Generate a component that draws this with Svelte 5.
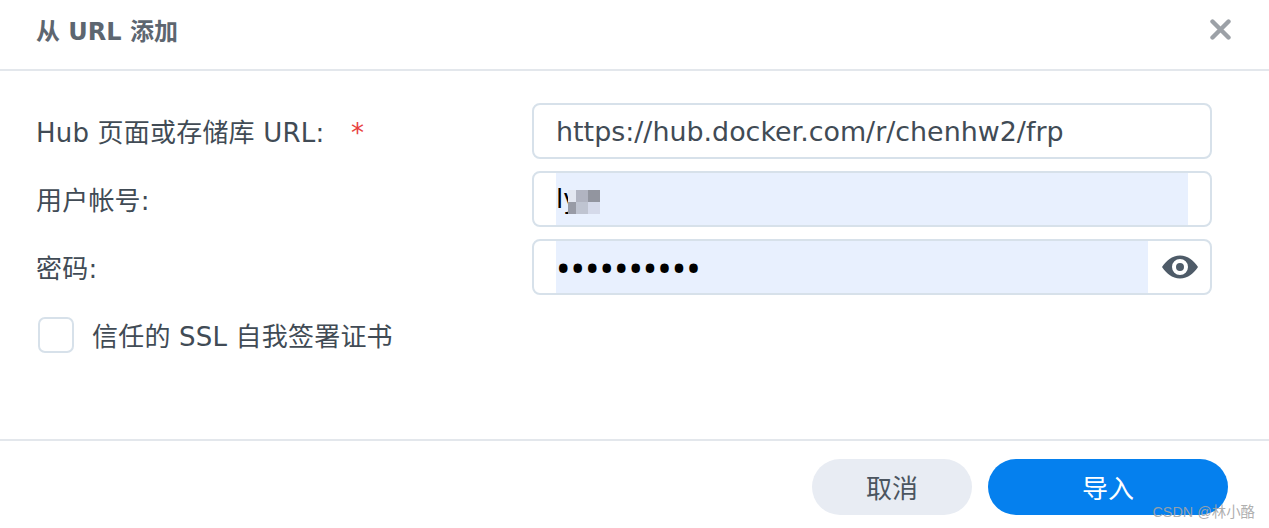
<script>
	let url = $state('https://hub.docker.com/r/chenhw2/frp');
	let user = $state('ly');
	let password = $state('1234567890');
	let trusted = $state(false);

	const mosaic = ['#e3e7f1', '#b1b4c1', '#92959f', '#989ba6', '#bfc4d1', '#d5daea'];
</script>

<div class="dialog">
	<header class="head">
		<h1 class="title">从 URL 添加</h1>
		<button type="button" class="close" aria-label="关闭">
			<svg viewBox="0 0 21 21" width="21" height="21">
				<path d="M2.500 2.500 18.500 18.500M18.500 2.500 2.500 18.500" stroke="#9ca1a7" stroke-width="4.400" stroke-linecap="round" fill="none" />
			</svg>
		</button>
	</header>

	<div class="body">
		<div class="row">
			<label class="label" for="hub-url">Hub 页面或存储库 URL: <span class="req">*</span></label>
			<div class="field">
				<input id="hub-url" class="input url" type="text" bind:value={url} />
			</div>
		</div>
		<div class="row">
			<label class="label" for="hub-user">用户帐号:</label>
			<div class="field">
				<input id="hub-user" class="input filled black" type="text" bind:value={user} />
				<div class="mosaic">
					{#each mosaic as color}
						<span style="background: {color}"></span>
					{/each}
				</div>
			</div>
		</div>
		<div class="row">
			<label class="label" for="hub-pass">密码:</label>
			<div class="field has-eye">
				<input id="hub-pass" class="input filled black pass" type="password" bind:value={password} />
				<button type="button" class="eye" aria-label="显示密码">
					<svg viewBox="0 0 36 24" width="36" height="24">
						<path fill-rule="evenodd" fill="#4e5b68" d="M18 .5C26 .5 32 6 36 12 32 18 26 23.500 18 23.500 10 23.500 4 18 0 12 4 6 10 .5 18 .5ZM18 4A8 8 0 1 0 18 20 8 8 0 1 0 18 4ZM18 8A4 4 0 1 1 18 16 4 4 0 1 1 18 8Z" />
					</svg>
				</button>
			</div>
		</div>
		<label class="check">
			<input type="checkbox" class="box" bind:checked={trusted} />
			<span class="check-text">信任的 SSL 自我签署证书</span>
		</label>
	</div>

	<footer class="foot">
		<button type="button" class="btn cancel">取消</button>
		<button type="button" class="btn primary">导入</button>
	</footer>

	<div class="watermark">CSDN @林小酪</div>
</div>

<style>
	:global(body) {
		margin: 0;
		background: #fff;
	}
	.dialog {
		position: relative;
		width: 1269px;
		height: 528px;
		overflow: hidden;
		display: flex;
		flex-direction: column;
		font-family: "DejaVu Sans", "Noto Sans CJK SC", sans-serif;
		color: #414b55;
	}
	.head {
		height: 71px;
		flex-shrink: 0;
		display: flex;
		align-items: center;
		justify-content: space-between;
		padding: 0 38px 11px 36px;
		box-sizing: border-box;
		border-bottom: 2px solid #e3e7ec;
	}
	.title {
		margin: 0;
		font-size: 24px;
		font-weight: 700;
		color: #5d6670;
	}
	.close {
		padding: 0;
		border: 0;
		background: none;
		display: flex;
	}
	.body {
		flex: 1;
		display: flex;
		flex-direction: column;
		gap: 12px;
		padding: 32px 57px 0 36px;
	}
	.row {
		display: flex;
		align-items: center;
		height: 56px;
	}
	.label {
		width: 496px;
		flex-shrink: 0;
		font-size: 26px;
		letter-spacing: 0.2px;
		white-space: pre;
		padding-bottom: 2px;
	}
	.req {
		color: #e8413e;
		margin-left: 18px;
	}
	.field {
		position: relative;
		flex: 1;
		height: 56px;
		box-sizing: border-box;
		border: 2px solid #d7e1ea;
		border-radius: 8px;
		padding: 0 22px;
		display: flex;
		align-items: stretch;
	}
	.field.has-eye {
		padding-right: 0;
	}
	.input {
		flex: 1;
		min-width: 0;
		border: 0;
		outline: none;
		padding: 0;
		background: transparent;
		font-family: inherit;
		font-size: 26px;
		color: #414b55;
	}
	.input.url {
		font-size: 26.900px;
	}
	.input.filled {
		background: #e8f0fe;
	}
	.input.black {
		color: #000;
	}
	.input.pass {
		font-family: "Noto Sans", sans-serif;
		font-size: 38.500px;
	}
	.eye {
		width: 62px;
		flex-shrink: 0;
		padding: 0 0 0 2px;
		border: 0;
		background: none;
		display: flex;
		align-items: center;
		justify-content: center;
	}
	.mosaic {
		position: absolute;
		left: 34px;
		top: 17px;
		display: grid;
		grid-template-columns: 8px 12px 12px;
		grid-template-rows: repeat(2, 12px);
	}
	.check {
		display: flex;
		align-items: center;
		gap: 18px;
		margin: 10px 0 0 2px;
		font-size: 26px;
		height: 36px;
	}
	.check-text {
		letter-spacing: 0.2px;
		padding-bottom: 2px;
	}
	.box {
		appearance: none;
		margin: 0;
		width: 36px;
		height: 36px;
		box-sizing: border-box;
		border: 2px solid #d7e1ea;
		border-radius: 7px;
		background: #fff;
	}
	.foot {
		height: 89px;
		flex-shrink: 0;
		box-sizing: border-box;
		border-top: 2px solid #e3e7ec;
		display: flex;
		justify-content: flex-end;
		gap: 16px;
		padding: 18px 41px 0 0;
	}
	.btn {
		height: 56px;
		border: 0;
		border-radius: 28px;
		font-family: inherit;
		font-size: 26px;
		padding: 0 0 2px;
	}
	.cancel {
		width: 160px;
		background: #e8ecf3;
		color: #4b555f;
	}
	.primary {
		width: 240px;
		background: #0580ee;
		color: #fff;
	}
	.watermark {
		position: absolute;
		right: 14px;
		bottom: 7px;
		font-size: 14.400px;
		color: rgba(165, 165, 165, 0.9);
		font-family: "Liberation Sans", "Noto Sans CJK SC", sans-serif;
	}
</style>
